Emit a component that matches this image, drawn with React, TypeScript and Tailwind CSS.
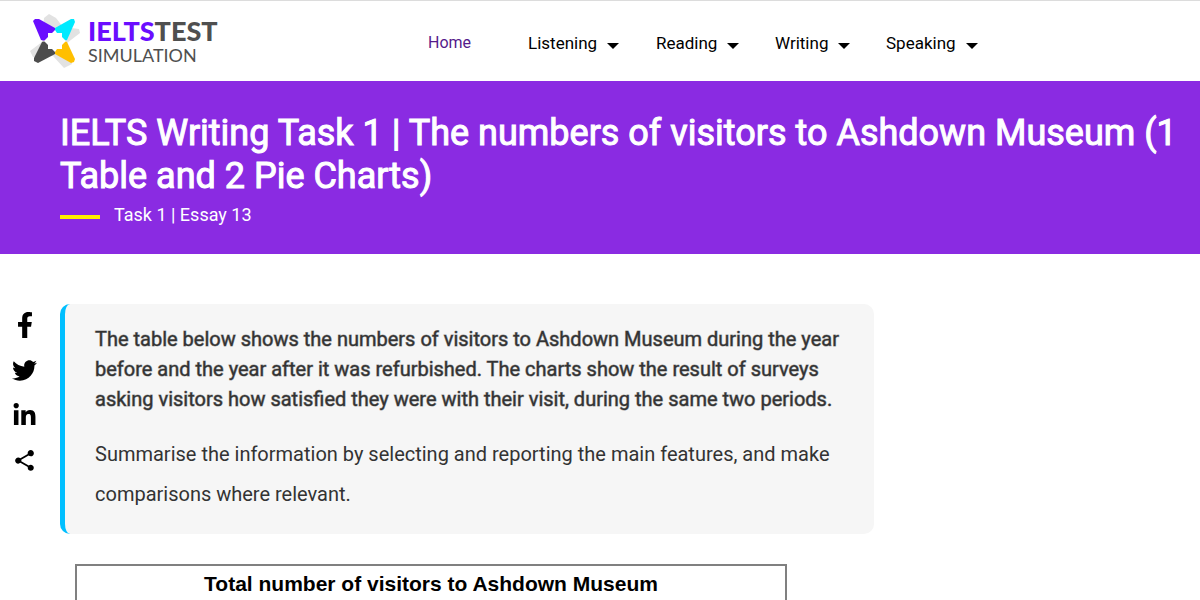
import React from "react";
import { FaFacebookF, FaTwitter, FaLinkedinIn } from "react-icons/fa";
import { MdShare } from "react-icons/md";

const menus = [
  { label: "Listening", width: "w-32" },
  { label: "Reading", width: "w-[119px]" },
  { label: "Writing", width: "w-[111px]" },
  { label: "Speaking", width: "w-[94px]" },
];

const shares = [
  { label: "Share on Facebook", icon: <FaFacebookF size={26} /> },
  { label: "Share on Twitter", icon: <FaTwitter size={25} /> },
  { label: "Share on LinkedIn", icon: <FaLinkedinIn size={25} /> },
  { label: "More sharing options", icon: <MdShare size={25} /> },
];

function Logo() {
  return (
    <a href="#" aria-label="IELTS Test Simulation" className="flex items-center gap-2">
      <svg width="50" height="56" viewBox="0 0 50 56">
        {/* Grey star tilted behind the coloured one */}
        <path
          d="M14 5 L19 1 L26 5 L33 14 L49 16 L50 20 L37 30 L42 51 L34 55 L23 43 L3 44 L0 38 L12 29 Z"
          fill="#e2e2e2"
        />
        {/* One folded arm per colour */}
        <path d="M3 8 L5 6 L9 6 L25 15 L25 20 L16 28 L11 27 Z" fill="#6a0dff" />
        <path d="M25 15 L41 6 L44 6 L45 9 L37 27 L34 28 L25 20 Z" fill="#00eaff" />
        <path d="M12 29 L16 28 L25 37 L25 41 L8 50 L4 48 L4 45 Z" fill="#4d4d4d" />
        <path d="M25 37 L34 28 L37 29 L45 46 L44 49 L41 50 L25 41 Z" fill="#ffbf00" />
        <path d="M25 17 L27 20 L32 20 L32 24 L36 28 L32 32 L32 36 L27 36 L25 39 L22 36 L18 36 L18 32 L14 28 L18 24 L18 20 L22 20 Z" fill="#ffffff" />
      </svg>
      <span className="block font-[Lato,sans-serif] text-[#4f4f4f]">
        <span className="block text-[27px] leading-7 font-black">
          <span className="text-[#6a0dff]">IELTS</span>TEST
        </span>
        <span className="block text-lg leading-5">SIMULATION</span>
      </span>
    </a>
  );
}

function Header() {
  return (
    <header className="flex h-[81px] items-center border-t border-[#dcdcdc] bg-white pl-[30px]">
      <div className="w-[398px]">
        <Logo />
      </div>
      <nav className="flex items-center pt-1 text-black">
        <a href="#" className="w-[100px] text-base text-[#551a8b]">
          Home
        </a>
        {menus.map((menu) => (
          <div key={menu.label} className={menu.width}>
            <button type="button" className="flex items-center gap-2.5 pt-0.5 text-[17px]">
              {menu.label}
              <svg width="12" height="6" viewBox="0 0 12 6" className="mt-1">
                <path d="M0 0 H12 L6 6 Z" fill="currentColor" />
              </svg>
            </button>
          </div>
        ))}
      </nav>
    </header>
  );
}

export default function App() {
  return (
    <div className="bg-white font-[Roboto,sans-serif]">
      <Header />

      <section className="bg-[#8a2be2] pt-[31px] pr-5 pb-[27px] pl-[60px] text-white">
        <h1 className="text-4xl leading-[43px] [-webkit-text-stroke:1px]">
          IELTS Writing Task 1 | The numbers of visitors to Ashdown Museum (1 Table and 2 Pie Charts)
        </h1>
        <div className="mt-[5px] flex items-center gap-[14px]">
          <span className="mt-1 h-1 w-10 bg-[#ffee00]" />
          <p className="text-lg leading-6">Task 1 | Essay 13</p>
        </div>
      </section>

      <main className="flex pt-[50px]">
        <aside className="flex w-[60px] flex-col items-start gap-5 pt-2 pl-3 text-black">
          {shares.map((share) => (
            <button key={share.label} type="button" aria-label={share.label}>
              {share.icon}
            </button>
          ))}
        </aside>

        <article className="w-[814px]">
          <div className="rounded-[10px] border-l-[5px] border-[#00bfff] bg-[#f6f6f6] px-[30px] pt-5 pb-5 text-[#333]">
            <p className="text-xl leading-[30px] [-webkit-text-stroke:1px_#33333380]">
              The table below shows the numbers of visitors to Ashdown Museum during the year before and the year after
              it was refurbished. The charts show the result of surveys asking visitors how satisfied they were with
              their visit, during the same two periods.
            </p>
            <p className="mt-5 text-xl leading-10">
              Summarise the information by selecting and reporting the main features, and make comparisons where
              relevant.
            </p>
          </div>

          <div className="mt-[30px] ml-[15px] w-[712px] border-2 border-b-0 border-[#808080] pt-1 pb-3 text-center">
            <h2 className="font-['Liberation_Sans',sans-serif] text-[21px] leading-7 font-bold text-black">
              Total number of visitors to Ashdown Museum
            </h2>
          </div>
        </article>
      </main>
    </div>
  );
}
